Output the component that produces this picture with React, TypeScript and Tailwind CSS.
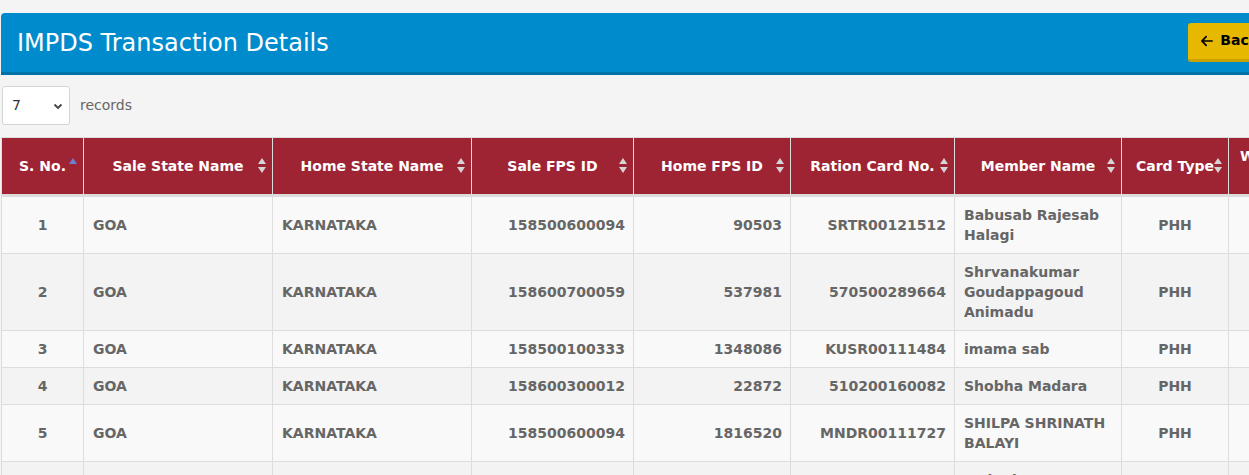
import React from "react";

type Row = {
  sno: string;
  sale: string;
  home: string;
  saleFps: string;
  homeFps: string;
  ration: string;
  member: string;
  card: string;
};

const rows: Row[] = [
  { sno: "1", sale: "GOA", home: "KARNATAKA", saleFps: "158500600094", homeFps: "90503", ration: "SRTR00121512", member: "Babusab Rajesab Halagi", card: "PHH" },
  { sno: "2", sale: "GOA", home: "KARNATAKA", saleFps: "158600700059", homeFps: "537981", ration: "570500289664", member: "Shrvanakumar Goudappagoud Animadu", card: "PHH" },
  { sno: "3", sale: "GOA", home: "KARNATAKA", saleFps: "158500100333", homeFps: "1348086", ration: "KUSR00111484", member: "imama sab", card: "PHH" },
  { sno: "4", sale: "GOA", home: "KARNATAKA", saleFps: "158600300012", homeFps: "22872", ration: "510200160082", member: "Shobha Madara", card: "PHH" },
  { sno: "5", sale: "GOA", home: "KARNATAKA", saleFps: "158500600094", homeFps: "1816520", ration: "MNDR00111727", member: "SHILPA SHRINATH BALAYI", card: "PHH" },
  { sno: "6", sale: "GOA", home: "KARNATAKA", saleFps: "158500600094", homeFps: "1816520", ration: "MNDR00111745", member: "Mahadevappa Shivalingappa Halabhavi", card: "PHH" },
];

function SortBoth() {
  return (
    <svg width="8" height="16" viewBox="0 0 8 16" className="absolute right-[6px] top-1/2 -translate-y-1/2">
      <polygon points="4,0 8,6 0,6" fill="#d4d4d4" />
      <polygon points="0,9 8,9 4,15" fill="#d4d4d4" />
    </svg>
  );
}

function SortAsc() {
  return (
    <svg width="8" height="16" viewBox="0 0 8 16" className="absolute right-[6px] top-1/2 -translate-y-1/2">
      <polygon points="4,0 8,6 0,6" fill="#6f7fd6" />
    </svg>
  );
}

const headers = [
  "S. No.",
  "Sale State Name",
  "Home State Name",
  "Sale FPS ID",
  "Home FPS ID",
  "Ration Card No.",
  "Member Name",
  "Card Type",
  "Wheat",
];

export default function App() {
  return (
    <div
      className="w-[1249px] h-[475px] overflow-hidden bg-[#f4f4f4]"
      style={{ fontFamily: '"DejaVu Sans", Verdana, sans-serif' }}
    >
      <div className="w-[1420px] pt-[13px] pl-[1px]">
        <div className="flex items-center h-[62px] bg-[#008bcd] border-b-[3px] border-[#0072a8] rounded-tl-[4px] pl-[16px]">
          <h1 className="text-[24px] leading-none text-white font-normal">IMPDS Transaction Details</h1>
          <div className="ml-auto mr-[149px] flex items-center gap-[7px] h-[39px] px-[13px] bg-[#e6b800] border-b-[3px] border-[#c9a200] rounded-[3px] text-black font-bold text-[14px] mb-[1px]">
            <svg width="12" height="14" viewBox="0 0 448 512">
              <path
                fill="#000"
                d="M9.4 233.4c-12.5 12.5-12.5 32.8 0 45.3l160 160c12.5 12.5 32.8 12.5 45.3 0s12.5-32.8 0-45.3L109.2 288 416 288c17.7 0 32-14.3 32-32s-14.3-32-32-32l-306.7 0L214.6 118.6c12.5-12.5 12.5-32.8 0-45.3s-32.8-12.5-45.3 0l-160 160z"
              />
            </svg>
            <span>Back</span>
          </div>
        </div>

        <div className="flex items-center gap-[10px] mt-[11px] ml-[1px]">
          <div className="relative w-[68px] h-[39px] bg-white border border-[#d4d4d4] rounded-[3px] flex items-center pl-[9px] text-[14px] text-[#333]">
            <span>7</span>
            <svg className="absolute right-[6px] top-1/2 -translate-y-1/2" width="10" height="10" viewBox="0 0 10 10">
              <path d="M1.5 3.5 L5 7 L8.5 3.5" fill="none" stroke="#444" strokeWidth="1.8" />
            </svg>
          </div>
          <span className="text-[14px] text-[#666]">records</span>
        </div>

        <table className="mt-[12px] table-fixed border-collapse w-[1410px] text-[14px] leading-5">
          <colgroup>
            <col className="w-[82px]" />
            <col className="w-[189px]" />
            <col className="w-[199px]" />
            <col className="w-[162px]" />
            <col className="w-[157px]" />
            <col className="w-[164px]" />
            <col className="w-[167px]" />
            <col className="w-[107px]" />
            <col className="w-[183px]" />
          </colgroup>
          <thead>
            <tr className="bg-[#9e2434] border-t border-[#dddddd]">
              {headers.map((h, i) => (
                <th
                  key={h}
                  className="relative h-[58px] py-0 px-[4px] text-white font-bold text-center border-x border-[#dddddd] border-b-[3px] border-b-[#dcdcdc] whitespace-nowrap"
                >
                  <span className={i === 8 ? "absolute left-[11px] top-[8px]" : ""}>{h}</span>
                  {i === 0 ? <SortAsc /> : i === 8 ? null : <SortBoth />}
                </th>
              ))}
            </tr>
          </thead>
          <tbody>
            {rows.map((r, idx) => (
              <tr key={idx} className={idx % 2 === 0 ? "bg-[#f9f9f9]" : "bg-[#f3f3f3]"}>
                <td className="border border-[#dddddd] py-2 px-[9px] text-center font-bold text-[#666]">{r.sno}</td>
                <td className="border border-[#dddddd] py-2 px-[9px] text-left font-bold text-[#666]">{r.sale}</td>
                <td className="border border-[#dddddd] py-2 px-[9px] text-left font-bold text-[#666]">{r.home}</td>
                <td className="border border-[#dddddd] py-2 px-[8px] text-right font-bold text-[#666]">{r.saleFps}</td>
                <td className="border border-[#dddddd] py-2 px-[8px] text-right font-bold text-[#666]">{r.homeFps}</td>
                <td className="border border-[#dddddd] py-2 px-[8px] text-right font-bold text-[#666]">{r.ration}</td>
                <td className="border border-[#dddddd] py-2 px-[9px] text-left font-bold text-[#666]">{r.member}</td>
                <td className="border border-[#dddddd] py-2 px-[9px] text-center font-bold text-[#666]">{r.card}</td>
                <td className="border border-[#dddddd] py-2 px-[9px] text-center font-bold text-[#666]"></td>
              </tr>
            ))}
          </tbody>
        </table>
      </div>
    </div>
  );
}
